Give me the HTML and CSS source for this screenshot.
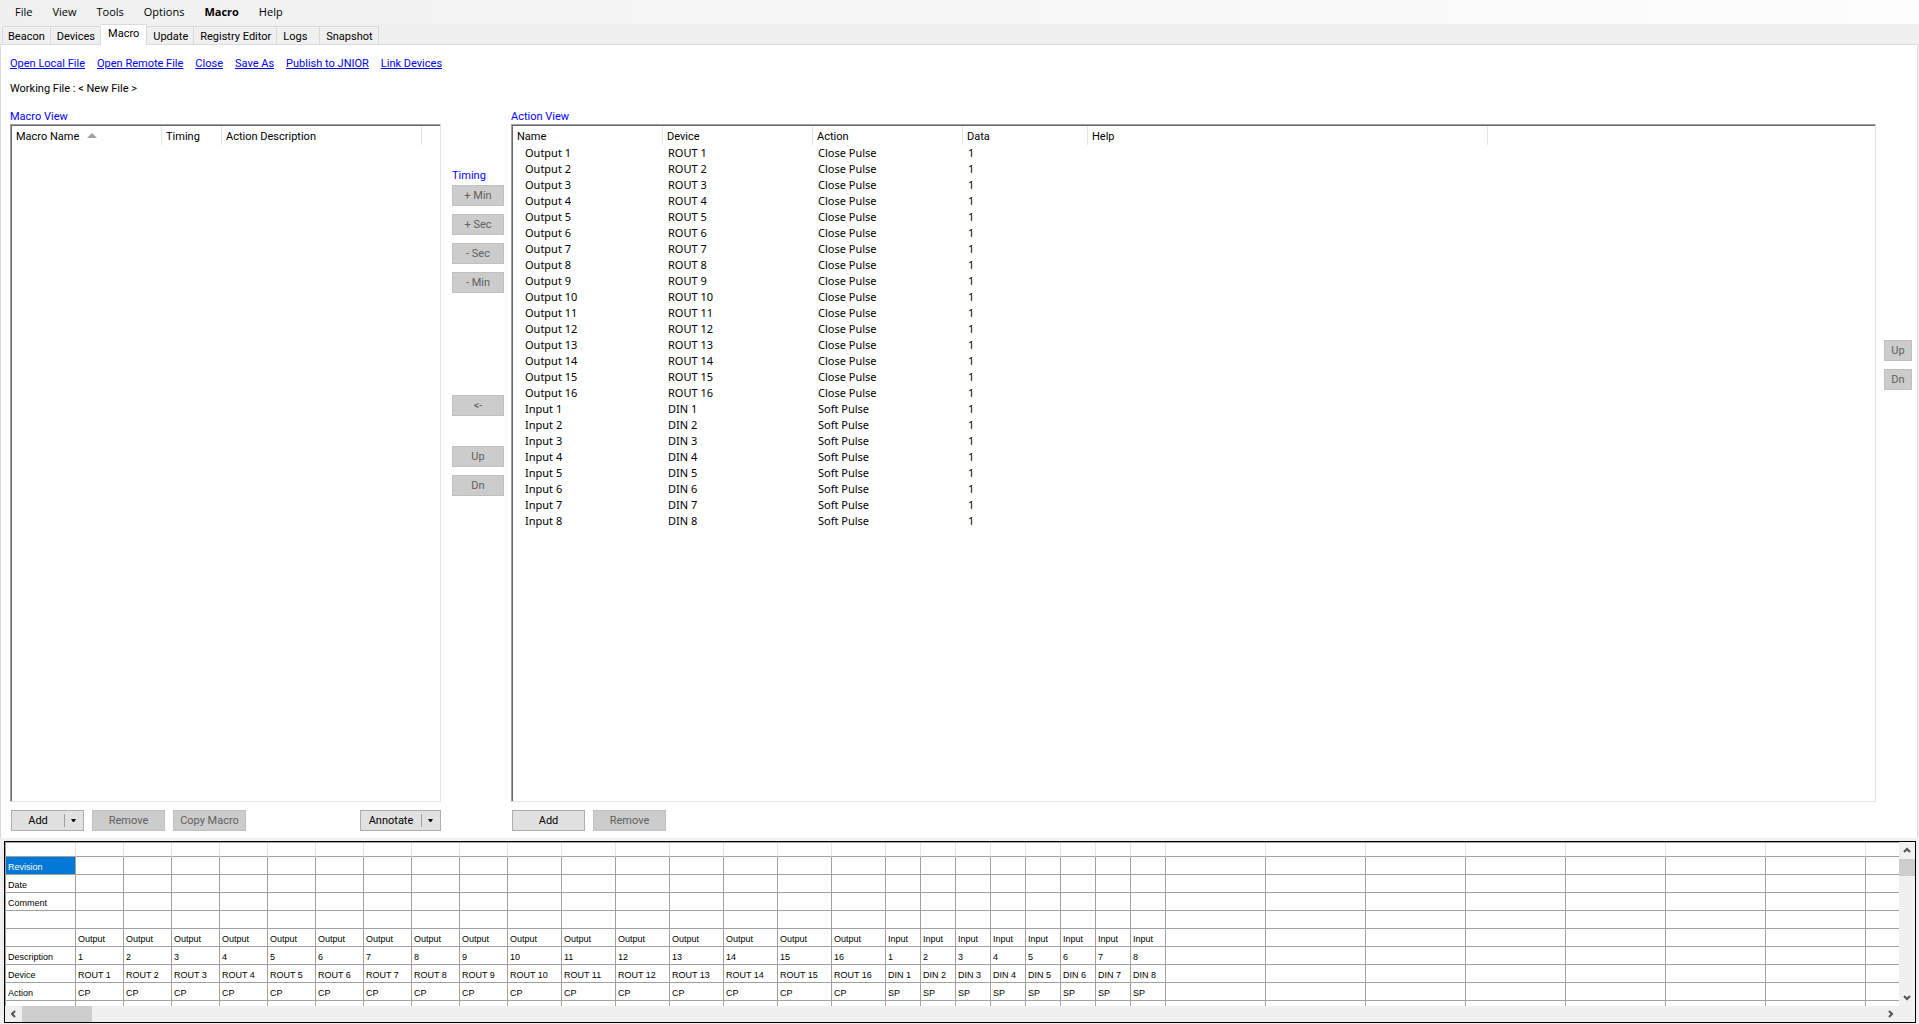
FILE: index.html
```html
<!DOCTYPE html>
<html lang="en">
<head>
  <meta charset="UTF-8" />
  <meta name="viewport" content="width=device-width, initial-scale=1" />
  <title>Macro</title>
  <link rel="stylesheet" href="styles.css">
</head>
<body>

  <header class="menubar">
    <button type="button">File</button>
    <button type="button">View</button>
    <button type="button">Tools</button>
    <button type="button">Options</button>
    <button type="button" class="current">Macro</button>
    <button type="button">Help</button>
  </header>

  <nav class="tabs">
    <button type="button">Beacon</button>
    <button type="button">Devices</button>
    <button type="button" class="active">Macro</button>
    <button type="button">Update</button>
    <button type="button">Registry Editor</button>
    <button type="button">Logs</button>
    <button type="button">Snapshot</button>
  </nav>

  <main class="page">
    <div class="links">
      <a href="#">Open Local File</a>
      <a href="#">Open Remote File</a>
      <a href="#">Close</a>
      <a href="#">Save As</a>
      <a href="#">Publish to JNIOR</a>
      <a href="#">Link Devices</a>
    </div>
    <p class="working-file">Working File : &lt; New File &gt;</p>

    <div class="workspace">
      <section class="pane macro-pane">
        <h2>Macro View</h2>
        <div class="list">
          <table class="list-table">
            <colgroup>
              <col class="w-macro"><col class="w-timing"><col class="w-desc"><col>
            </colgroup>
            <thead>
              <tr>
                <th>Macro Name<svg class="sort" viewBox="0 0 10 5"><path d="M0 5L5 0L10 5Z" /></svg></th>
                <th>Timing</th>
                <th>Action Description</th>
                <th></th>
              </tr>
            </thead>
          </table>
        </div>
        <div class="pane-buttons">
          <button type="button" class="btn split"><span>Add</span><svg viewBox="0 0 5 3"><path d="M0 0H5L3 3H2Z" /></svg></button>
          <button type="button" class="btn" disabled>Remove</button>
          <button type="button" class="btn" disabled>Copy Macro</button>
          <button type="button" class="btn split annotate"><span>Annotate</span><svg viewBox="0 0 5 3"><path d="M0 0H5L3 3H2Z" /></svg></button>
        </div>
      </section>

      <section class="timing">
        <h2>Timing</h2>
        <button type="button" class="btn" disabled>+ Min</button>
        <button type="button" class="btn" disabled>+ Sec</button>
        <button type="button" class="btn" disabled>- Sec</button>
        <button type="button" class="btn" disabled>- Min</button>
        <button type="button" class="btn assign" disabled>&lt;-</button>
        <button type="button" class="btn move" disabled>Up</button>
        <button type="button" class="btn" disabled>Dn</button>
      </section>

      <section class="pane action-pane">
        <h2>Action View</h2>
        <div class="list">
          <table class="list-table">
            <colgroup>
              <col class="w-name"><col class="w-name"><col class="w-name"><col class="w-data"><col class="w-help"><col>
            </colgroup>
            <thead>
              <tr><th>Name</th><th>Device</th><th>Action</th><th>Data</th><th>Help</th><th></th></tr>
            </thead>
            <tbody id="actionRows"></tbody>
          </table>
        </div>
        <div class="pane-buttons">
          <button type="button" class="btn">Add</button>
          <button type="button" class="btn" disabled>Remove</button>
        </div>
      </section>

      <div class="order">
        <button type="button" class="btn" disabled>Up</button>
        <button type="button" class="btn" disabled>Dn</button>
      </div>
    </div>
  </main>

  <section class="sheet">
    <div class="sheet-view">
      <table class="sheet-table" id="sheet"></table>
    </div>
    <div class="vbar">
      <button type="button" aria-label="Scroll up"><svg viewBox="0 0 8 6"><path d="M1 5L4 2L7 5" /></svg></button>
      <div class="thumb"></div>
      <button type="button" class="end" aria-label="Scroll down"><svg viewBox="0 0 8 6"><path d="M1 1L4 4L7 1" /></svg></button>
    </div>
    <div class="hbar">
      <button type="button" aria-label="Scroll left"><svg viewBox="0 0 6 8"><path d="M5 1L2 4L5 7" /></svg></button>
      <div class="thumb"></div>
      <button type="button" class="end" aria-label="Scroll right"><svg viewBox="0 0 6 8"><path d="M1 1L4 4L1 7" /></svg></button>
    </div>
  </section>

  <script src="script.js"></script>
</body>
</html>
```

FILE: styles.css
```css
* {
  box-sizing: border-box;
}
body {
  margin: 0;
  height: 100vh;
  display: flex;
  flex-direction: column;
  background: #f0f0f0;
  color: #000;
  font: 11px/16px Roboto, "Liberation Sans", sans-serif;
}
button {
  font: inherit;
  color: inherit;
}
h2 {
  margin: 0;
  font-size: 11px;
  font-weight: normal;
  line-height: 15px;
  color: #0000ff;
}

/* menu and tabs */
.menubar {
  display: flex;
  height: 24px;
  padding-left: 5px;
  background: linear-gradient(90deg, #f0f0f0, #fdfdfd);
  font-family: "Open Sans", "Noto Sans", sans-serif;
}
.menubar button {
  border: none;
  background: none;
  padding: 0 10px;
}
.menubar .current {
  font-weight: bold;
}
.tabs {
  display: flex;
  align-items: flex-end;
  height: 20px;
  padding-left: 2px;
}
.tabs button {
  height: 18px;
  min-width: 43px;
  padding: 2px 5px 0 6px;
  border: 1px solid #d9d9d9;
  border-width: 1px 1px 0 0;
  background: #f0f0f0;
  line-height: 15px;
  text-align: left;
}
.tabs button:first-child {
  padding-left: 5px;
  border-left-width: 1px;
}
.tabs .active {
  height: 21px;
  margin-bottom: -1px;
  padding: 0 7px 3px;
  background: #fff;
  z-index: 1;
}

/* page */
.page {
  flex: 1;
  min-height: 0;
  display: flex;
  flex-direction: column;
  padding: 11px 5px 7px 9px;
  border: 1px solid #dcdcdc;
  border-bottom: none;
  margin-right: 1px;
  background: #fff;
}
.links {
  display: flex;
  gap: 12px;
}
.links a {
  color: #0000ff;
}
.working-file {
  margin: 9px 0 12px;
}
.workspace {
  flex: 1;
  min-height: 0;
  display: flex;
}
.pane {
  display: flex;
  flex-direction: column;
}
.macro-pane {
  width: 431px;
}
.action-pane {
  flex: 1;
  min-width: 0;
}
.list {
  flex: 1;
  min-height: 0;
  overflow: hidden;
  padding: 1px 0 0 1px;
  border: 1px solid #e3e3e3;
  border-top-color: #a0a0a0;
  border-left-color: #a0a0a0;
  box-shadow: inset 1px 1px #696969;
}
.list-table {
  width: 100%;
  table-layout: fixed;
  border-collapse: separate;
  border-spacing: 0;
}
.list-table th {
  height: 19px;
  padding: 2px 4px 0;
  border-right: 1px solid #e5e5e5;
  font-weight: normal;
  text-align: left;
  white-space: nowrap;
}
.list-table th:last-child {
  border-right: none;
}
.list-table td {
  height: 16px;
  padding: 0 5px;
  font-family: "Noto Sans", "Open Sans", sans-serif;
  line-height: 16px;
  white-space: nowrap;
}
.list-table td:first-child {
  padding-left: 12px;
}
.w-macro { width: 150px; }
.w-timing { width: 60px; }
.w-desc { width: 200px; }
.w-name { width: 150px; }
.w-data { width: 125px; }
.w-help { width: 400px; }
.sort {
  width: 10px;
  height: 5px;
  margin: 0 0 2px 8px;
  fill: #a0a0a0;
}

/* buttons */
.btn {
  height: 21px;
  padding: 1px 0 0;
  border: 1px solid #adadad;
  background: #e1e1e1;
  line-height: 18px;
}
.btn:disabled {
  border-color: #bfbfbf;
  background: #cccccc;
  color: #606060;
}
.pane-buttons {
  display: flex;
  gap: 8px;
  padding: 8px 0 0 1px;
}
.pane-buttons .btn {
  width: 73px;
}
.pane-buttons .split {
  display: flex;
  align-items: center;
  padding: 0;
}
.split span {
  flex: 1;
  height: 13px;
  line-height: 14px;
  border-right: 1px solid #a0a0a0;
}
.split svg {
  width: 5px;
  height: 3px;
  margin: 0 7px 0 6px;
}
.pane-buttons .annotate {
  width: 81px;
  margin-left: auto;
}
.timing {
  display: flex;
  flex-direction: column;
  gap: 8px;
  width: 52px;
  margin: 59px 7px 0 11px;
}
.timing h2 {
  margin-bottom: -6px;
}
.timing .assign {
  margin-top: 94px;
}
.timing .move {
  margin-top: 22px;
}
.order {
  display: flex;
  flex-direction: column;
  gap: 8px;
  width: 28px;
  margin: 231px 0 0 8px;
}

/* spreadsheet */
.sheet {
  display: grid;
  grid-template-columns: 1fr 16px;
  grid-template-rows: 164px 16px;
  margin: 3px 3px 1px 4px;
  border: 1px solid #000;
}
.sheet-view {
  overflow: hidden;
  min-width: 0;
  border-top: 1px solid #a0a0a0;
  border-left: 1px solid #a0a0a0;
  background: #fff;
}
.sheet-table {
  width: 100%;
  table-layout: fixed;
  border-collapse: separate;
  border-spacing: 0;
  font-family: "Liberation Sans", Arial, sans-serif;
  font-size: 9px;
}
.sheet-table th,
.sheet-table td {
  height: 18px;
  padding: 4px 0 0 2px;
  border: 1px solid #a0a0a0;
  border-width: 0 1px 1px 0;
  font-weight: normal;
  line-height: 13px;
  text-align: left;
  white-space: nowrap;
}
.sheet-table thead th {
  height: 14px;
  padding: 0;
  border-right-color: #e5e5e5;
}
.sheet-table th:last-child,
.sheet-table td:last-child {
  border-right: none;
}
.sheet-table .selected {
  background: #0078d7;
  color: #fff;
}
.vbar,
.hbar {
  display: flex;
  gap: 1px;
  background: #f0f0f0;
}
.vbar {
  flex-direction: column;
}
.vbar button,
.hbar button {
  display: flex;
  align-items: center;
  justify-content: center;
  width: 16px;
  height: 16px;
  padding: 0;
  border: none;
  background: none;
}
.vbar svg {
  width: 8px;
  height: 6px;
}
.hbar svg {
  width: 6px;
  height: 8px;
}
.vbar path,
.hbar path {
  fill: none;
  stroke: #505050;
  stroke-width: 2;
}
.vbar .thumb {
  height: 17px;
  background: #cdcdcd;
}
.hbar .thumb {
  width: 70px;
  background: #cdcdcd;
}
.vbar .end {
  margin-top: auto;
}
.hbar .end {
  margin-left: auto;
}
```

FILE: script.js
```js
const points = [];
for (let i = 1; i <= 16; i++) {
  points.push({ kind: 'Output', num: i, device: 'ROUT ' + i, action: 'Close Pulse', code: 'CP', width: i < 10 ? 48 : 54 });
}
for (let i = 1; i <= 8; i++) {
  points.push({ kind: 'Input', num: i, device: 'DIN ' + i, action: 'Soft Pulse', code: 'SP', width: 35 });
}

// action list
document.getElementById('actionRows').innerHTML = points.map(p =>
  `<tr><td>${p.kind} ${p.num}</td><td>${p.device}</td><td>${p.action}</td><td>1</td><td></td><td></td></tr>`
).join('');

// spreadsheet: label column, one column per point, then empty columns
const emptyCols = 8;
const widths = [70, ...points.map(p => p.width), ...Array(emptyCols - 1).fill(100)];

function sheetRow(label, getText, cls) {
  const cells = points.map(p => `<td>${getText ? getText(p) : ''}</td>`).join('');
  return `<tr><th class="${cls || ''}">${label}</th>${cells}${'<td></td>'.repeat(emptyCols)}</tr>`;
}

document.getElementById('sheet').innerHTML =
  `<colgroup>${widths.map(w => `<col style="width:${w}px">`).join('')}<col></colgroup>` +
  `<thead><tr>${'<th></th>'.repeat(widths.length + 1)}</tr></thead><tbody>` +
  sheetRow('Revision', null, 'selected') +
  sheetRow('Date') +
  sheetRow('Comment') +
  sheetRow('') +
  sheetRow('', p => p.kind) +
  sheetRow('Description', p => p.num) +
  sheetRow('Device', p => p.device) +
  sheetRow('Action', p => p.code) +
  sheetRow('') +
  '</tbody>';
```
